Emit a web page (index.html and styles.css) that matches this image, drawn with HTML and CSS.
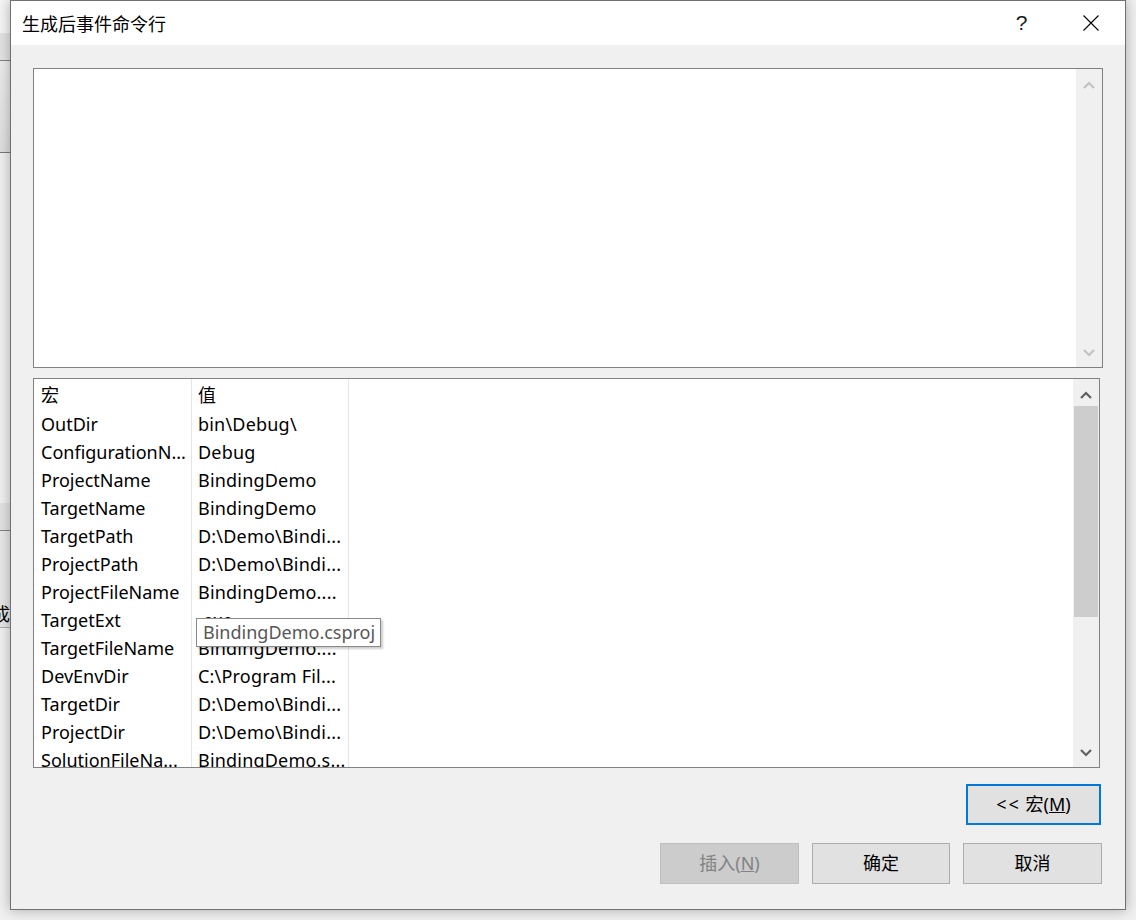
FILE: index.html
```html
<!DOCTYPE html>
<html lang="zh-CN">
<head>
    <meta charset="UTF-8">
    <meta name="viewport" content="width=device-width, initial-scale=1.0">
    <title>生成后事件命令行</title>
    <link rel="stylesheet" href="styles.css">
</head>
<body>
    <div id="desk">
        <div id="backdrop">
            <div class="bd-top"></div>
            <div class="bd-tab"></div>
            <div class="bd-panel"></div>
            <div class="bd-plain"></div>
            <div class="bd-tab"></div>
            <div class="bd-low"></div>
            <div class="bd-button">成</div>
            <div class="bd-rest"></div>
        </div>
        <div id="dialog">
            <div class="titlebar">
                <span class="title">生成后事件命令行</span>
                <span class="help">?</span>
                <span class="close">
                    <svg width="16" height="16" viewBox="0 0 16 16">
                        <path d="M0.5 0.5 L15.5 15.5 M15.5 0.5 L0.5 15.5" stroke="#000" stroke-width="1.1" fill="none"/>
                    </svg>
                </span>
            </div>
            <div class="content">
                <div class="editor">
                    <div class="editor-text"></div>
                    <div class="vscroll disabled">
                        <div class="arrow up">
                            <svg width="12" height="8" viewBox="0 0 12 8"><path d="M1 7 L6 2 L11 7" stroke="currentColor" stroke-width="2.2" fill="none"/></svg>
                        </div>
                        <div class="track"></div>
                        <div class="arrow down">
                            <svg width="12" height="8" viewBox="0 0 12 8"><path d="M1 1 L6 6 L11 1" stroke="currentColor" stroke-width="2.2" fill="none"/></svg>
                        </div>
                    </div>
                </div>
                <div class="macros">
                    <div class="grid">
                        <div class="row head"><span class="cell name">宏</span><span class="cell value">值</span></div>
                        <div class="row"><span class="cell name">OutDir</span><span class="cell value">bin\Debug\</span></div>
                        <div class="row"><span class="cell name">ConfigurationN...</span><span class="cell value">Debug</span></div>
                        <div class="row"><span class="cell name">ProjectName</span><span class="cell value">BindingDemo</span></div>
                        <div class="row"><span class="cell name">TargetName</span><span class="cell value">BindingDemo</span></div>
                        <div class="row"><span class="cell name">TargetPath</span><span class="cell value">D:\Demo\Bindi...</span></div>
                        <div class="row"><span class="cell name">ProjectPath</span><span class="cell value">D:\Demo\Bindi...</span></div>
                        <div class="row"><span class="cell name">ProjectFileName</span><span class="cell value">BindingDemo....</span></div>
                        <div class="row"><span class="cell name">TargetExt</span><span class="cell value">.exe</span></div>
                        <div class="row"><span class="cell name">TargetFileName</span><span class="cell value">BindingDemo....</span></div>
                        <div class="row"><span class="cell name">DevEnvDir</span><span class="cell value">C:\Program Fil...</span></div>
                        <div class="row"><span class="cell name">TargetDir</span><span class="cell value">D:\Demo\Bindi...</span></div>
                        <div class="row"><span class="cell name">ProjectDir</span><span class="cell value">D:\Demo\Bindi...</span></div>
                        <div class="row"><span class="cell name">SolutionFileNa...</span><span class="cell value">BindingDemo.s...</span></div>
                        <div class="filler"><span class="cell name"></span><span class="cell value"></span></div>
                    </div>
                    <div class="vscroll">
                        <div class="arrow up">
                            <svg width="12" height="8" viewBox="0 0 12 8"><path d="M1 7 L6 2 L11 7" stroke="currentColor" stroke-width="2.2" fill="none"/></svg>
                        </div>
                        <div class="track"><div class="thumb"></div></div>
                        <div class="arrow down">
                            <svg width="12" height="8" viewBox="0 0 12 8"><path d="M1 1 L6 6 L11 1" stroke="currentColor" stroke-width="2.2" fill="none"/></svg>
                        </div>
                    </div>
                    <div class="tooltip">BindingDemo.csproj</div>
                </div>
                <div class="macro-bar">
                    <button class="btn macro-button"><span class="chevrons">&lt;&lt;</span> 宏(<u>M</u>)</button>
                </div>
                <div class="actions">
                    <button class="btn" disabled>插入(<u>N</u>)</button>
                    <button class="btn">确定</button>
                    <button class="btn">取消</button>
                </div>
            </div>
        </div>
    </div>
</body>
</html>
```

FILE: styles.css
```css
body {
    margin: 0;
    padding: 0;
    background-color: #f0f0f0;
    font-family: "Noto Sans", "Noto Sans CJK SC", sans-serif;
    font-size: 18px;
    color: #000000;
    overflow: hidden;
}
#desk {
    display: flex;
    width: 1136px;
    height: 920px;
}

/* window behind the dialog */
#backdrop {
    width: 10px;
    display: flex;
    flex-direction: column;
    overflow: hidden;
}
.bd-top {
    height: 33px;
    background-color: #f5f5f5;
}
.bd-tab {
    height: 27px;
    background-color: #e3e3e3;
    border-bottom: 1px solid #808080;
}
.bd-panel {
    height: 91px;
    background: linear-gradient(#ececec, #dedede);
    border-bottom: 1px solid #7a7a7a;
}
.bd-plain {
    height: 350px;
    background-color: #f0f0f0;
}
.bd-low {
    height: 69px;
    background-color: #e8e8e8;
}
.bd-button {
    height: 27px;
    line-height: 27px;
    display: flex;
    justify-content: flex-end;
    background-color: #e6e6e6;
    border-bottom: 1px solid #adadad;
    font-family: "Noto Sans CJK SC", sans-serif;
    white-space: nowrap;
}
.bd-rest {
    flex: 1;
    background-color: #f0f0f0;
}

#dialog {
    width: 1116px;
    height: 910px;
    box-sizing: border-box;
    border: 1px solid #707070;
    background-color: #f0f0f0;
    box-shadow: 0 0 12px rgba(0, 0, 0, 0.3);
    display: flex;
    flex-direction: column;
    position: relative;
}
.titlebar {
    height: 44px;
    background-color: #ffffff;
    display: flex;
    align-items: center;
    padding-left: 11px;
}
.title {
    flex: 1;
    font-family: "Noto Sans CJK SC", sans-serif;
    font-size: 18px;
}
.help {
    width: 47px;
    margin-right: 12px;
    text-align: center;
    font-family: "Liberation Sans", sans-serif;
    font-size: 21px;
    color: #1a1a1a;
}
.close {
    width: 68px;
    height: 44px;
    display: flex;
    align-items: center;
    justify-content: center;
}

.content {
    padding: 23px 22px 0 22px;
}
.editor {
    height: 300px;
    box-sizing: border-box;
    border: 1px solid #828282;
    background-color: #ffffff;
    display: flex;
}
.editor-text {
    flex: 1;
}
.vscroll {
    width: 26px;
    background-color: #f0f0f0;
    display: flex;
    flex-direction: column;
    color: #606060;
}
.vscroll.disabled {
    color: #c2c2c2;
}
.arrow {
    height: 27px;
    box-sizing: border-box;
}
.arrow svg {
    display: block;
    margin: 0 auto;
}
.arrow.up {
    padding-top: 12px;
}
.arrow.down {
    padding-top: 9px;
}
.track {
    flex: 1;
}
.thumb {
    height: 211px;
    margin: 0 1px;
    background-color: #cdcdcd;
}

.macros {
    margin-top: 10px;
    margin-right: 3px;
    height: 390px;
    box-sizing: border-box;
    border: 1px solid #828282;
    background-color: #ffffff;
    display: flex;
    position: relative;
}
.grid {
    flex: 1;
    display: flex;
    flex-direction: column;
    overflow: hidden;
}
.row {
    display: flex;
    height: 28px;
    line-height: 28px;
    flex-shrink: 0;
}
.row.head {
    height: 31px;
    line-height: 31px;
    font-family: "Noto Sans CJK SC", sans-serif;
}
.filler {
    display: flex;
    flex: 1;
}
.cell {
    box-sizing: border-box;
    border-right: 1px solid #e5e5e5;
    white-space: nowrap;
    overflow: hidden;
}
.cell.name {
    width: 158px;
    padding-left: 7px;
}
.cell.value {
    width: 157px;
    padding-left: 6px;
    letter-spacing: 0.2px;
}
.tooltip {
    position: absolute;
    left: 162px;
    top: 239px;
    width: 185px;
    height: 29px;
    box-sizing: border-box;
    border: 1px solid #8a8a8a;
    background-color: #ffffff;
    box-shadow: 2px 2px 2px rgba(0, 0, 0, 0.2);
    color: #575757;
    line-height: 26px;
    padding-left: 6px;
    white-space: nowrap;
}

.btn {
    height: 41px;
    box-sizing: border-box;
    border: 1px solid #adadad;
    background-color: #e1e1e1;
    font-family: "Noto Sans", "Noto Sans CJK SC", sans-serif;
    font-size: 18px;
    color: #000000;
    padding: 0 0 3px 0;
}
.btn:disabled {
    background-color: #cccccc;
    border-color: #bfbfbf;
    color: #838383;
}
.macro-bar {
    margin-top: 16px;
    margin-right: 2px;
    display: flex;
    justify-content: flex-end;
}
.macro-button {
    width: 135px;
    border: 2px solid #0078d7;
    padding-bottom: 4px;
}
.chevrons {
    letter-spacing: 2px;
}
.actions {
    margin-top: 18px;
    margin-right: 1px;
    display: flex;
    justify-content: flex-end;
    gap: 13px;
}
.actions .btn {
    width: 139px;
}
.actions .btn:nth-child(2) {
    width: 138px;
}
```
